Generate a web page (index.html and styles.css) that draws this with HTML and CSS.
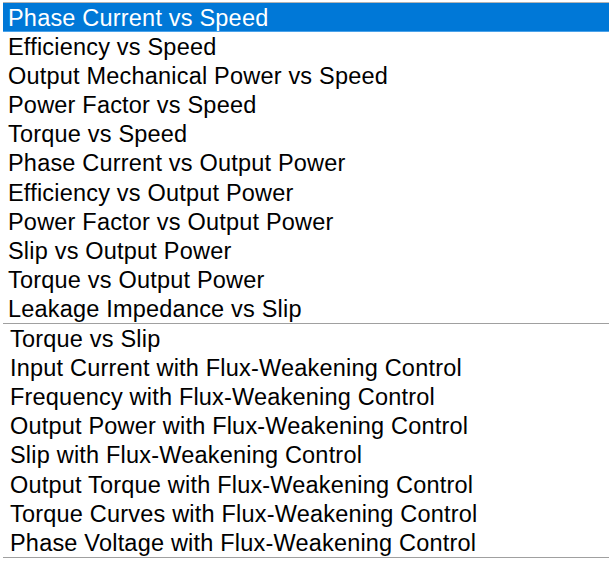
FILE: index.html
```html
<!DOCTYPE html>
<html>
<head>
<meta charset="utf-8">
<link rel="stylesheet" href="styles.css">
</head>
<body>
<div class="list">
  <div class="group">
    <div class="item selected">Phase Current vs Speed</div>
    <div class="item">Efficiency vs Speed</div>
    <div class="item">Output Mechanical Power vs Speed</div>
    <div class="item">Power Factor vs Speed</div>
    <div class="item">Torque vs Speed</div>
    <div class="item">Phase Current vs Output Power</div>
    <div class="item">Efficiency vs Output Power</div>
    <div class="item">Power Factor vs Output Power</div>
    <div class="item">Slip vs Output Power</div>
    <div class="item">Torque vs Output Power</div>
    <div class="item">Leakage Impedance vs Slip</div>
  </div>
  <div class="group second">
    <div class="item">Torque vs Slip</div>
    <div class="item">Input Current with Flux-Weakening Control</div>
    <div class="item">Frequency with Flux-Weakening Control</div>
    <div class="item">Output Power with Flux-Weakening Control</div>
    <div class="item">Slip with Flux-Weakening Control</div>
    <div class="item">Output Torque with Flux-Weakening Control</div>
    <div class="item">Torque Curves with Flux-Weakening Control</div>
    <div class="item">Phase Voltage with Flux-Weakening Control</div>
  </div>
</div>
</body>
</html>
```
FILE: styles.css
```css
html, body {
  margin: 0;
  padding: 0;
  background: #ffffff;
}
body {
  width: 609px;
  height: 561px;
  overflow: hidden;
}
.list {
  margin: 2px 0 0 3px;
  border-top: 1px solid #b4b4b4;
  font-family: "Liberation Sans", Arial, sans-serif;
  font-size: 23.5px;
  letter-spacing: 0.2px;
  color: #000000;
}
.group {
  border-bottom: 1px solid #a0a0a0;
}
.item {
  height: 29.1px;
  line-height: 29.1px;
  padding-left: 5px;
  white-space: nowrap;
  box-sizing: border-box;
  padding-top: 1px;
}
.second .item {
  padding-left: 7px;
}
.selected {
  background: #0078d7;
  color: #ffffff;
  box-shadow: inset 0 -1px 0 #4aa2ea;
}
```
